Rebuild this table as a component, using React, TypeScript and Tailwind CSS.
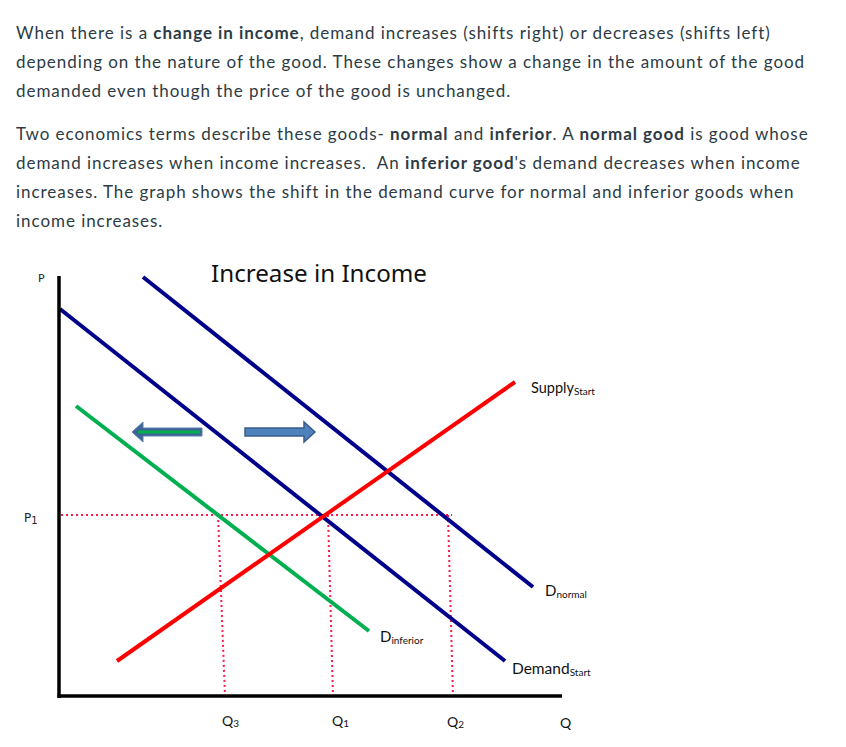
import React from "react";

// dotted guide lines share a style
const dotted = {
  stroke: "#ff1a4b",
  strokeWidth: 2,
  strokeDasharray: "2 3",
};

const labelFont = "Lato, 'Open Sans', sans-serif";

const IncomeChart: React.FC = () => {
  return (
    <svg
      width="846"
      height="497"
      viewBox="0 250 846 497"
      className="block"
      aria-label="Increase in Income graph"
    >
      {/* title */}
      <text
        x="211"
        y="283"
        fontFamily="'Noto Sans', 'DejaVu Sans', sans-serif"
        fontSize="24"
        textLength="216"
        lengthAdjust="spacingAndGlyphs"
        fill="#111"
      >
        Increase in Income
      </text>

      {/* axis labels */}
      <text x="38" y="283" fontFamily="'DejaVu Sans', sans-serif" fontSize="11" fill="#222">
        P
      </text>
      <text x="24" y="523" fontFamily="'DejaVu Sans', sans-serif" fontSize="12" fill="#222">
        P
        <tspan fontSize="10" dy="2">1</tspan>
      </text>

      {/* dotted guides */}
      <line x1="61" y1="516" x2="452" y2="516" {...dotted} />
      <line x1="218" y1="516" x2="225" y2="697" {...dotted} />
      <line x1="328" y1="516" x2="333" y2="697" {...dotted} />
      <line x1="448" y1="516" x2="453" y2="697" {...dotted} />

      {/* demand curves */}
      <line x1="143" y1="278" x2="533" y2="588" stroke="#00008b" strokeWidth="4" />
      <line x1="60" y1="310" x2="505" y2="662" stroke="#00008b" strokeWidth="4" />
      <line x1="76" y1="407" x2="369" y2="632" stroke="#00b050" strokeWidth="4" />

      {/* supply */}
      <line x1="117" y1="662" x2="515" y2="383" stroke="#ff0000" strokeWidth="4" />

      {/* axes */}
      <line x1="59" y1="277" x2="59" y2="699" stroke="#000" strokeWidth="3.5" />
      <line x1="57.5" y1="697" x2="562" y2="697" stroke="#000" strokeWidth="3.5" />

      {/* left shift arrow */}
      <polygon
        points="132,433 143,423 143,429 202,429 202,437 143,437 143,443"
        fill="#3e6593"
        stroke="#5b7fae"
        strokeWidth="1"
      />
      <line x1="138" y1="433" x2="200" y2="433" stroke="#00b050" strokeWidth="3" />

      {/* right shift arrow */}
      <polygon
        points="245,429 304,429 304,423 315,433 304,443 304,437 245,437"
        fill="#4f81bd"
        stroke="#385d8a"
        strokeWidth="1.5"
      />

      {/* curve labels */}
      <text x="531" y="394" fontFamily={labelFont} fontSize="14.5" fill="#111">
        Supply
        <tspan fontSize="10" dy="2">Start</tspan>
      </text>
      <text x="545" y="597" fontFamily={labelFont} fontSize="15" fill="#111">
        D
        <tspan fontSize="10" dy="2">normal</tspan>
      </text>
      <text x="380" y="643" fontFamily={labelFont} fontSize="15" fill="#111">
        D
        <tspan fontSize="10" dy="2">inferior</tspan>
      </text>
      <text x="512" y="675" fontFamily={labelFont} fontSize="15.5" fill="#111">
        Demand
        <tspan fontSize="10" dy="2">Start</tspan>
      </text>

      {/* quantity labels */}
      <text x="222" y="727" fontFamily={labelFont} fontSize="14" fill="#111">
        Q
        <tspan fontSize="10" dy="1">3</tspan>
      </text>
      <text x="332" y="727" fontFamily={labelFont} fontSize="14" fill="#111">
        Q
        <tspan fontSize="10" dy="1">1</tspan>
      </text>
      <text x="447" y="728" fontFamily={labelFont} fontSize="14" fill="#111">
        Q
        <tspan fontSize="10" dy="1">2</tspan>
      </text>
      <text x="560" y="729" fontFamily={labelFont} fontSize="14" fill="#111">
        Q
      </text>
    </svg>
  );
};

export default function App() {
  return (
    <div
      className="w-[846px] bg-white text-[#2d3b45]"
      style={{ fontFamily: "Lato, 'Open Sans', sans-serif" }}
    >
      <div className="px-4 pt-[18px] pr-[20px] text-[17px] leading-[29px] tracking-[0.95px]">
        <p>
          When there is a <strong className="font-bold">change in income</strong>, demand increases
          (shifts right) or decreases (shifts left) depending on the nature of the good. These
          changes show a change in the amount of the good demanded even though the price of the good
          is unchanged.
        </p>
        <p className="mt-[14px]">
          Two economics terms describe these goods- <strong className="font-bold">normal</strong>{" "}
          and <strong className="font-bold">inferior</strong>. A{" "}
          <strong className="font-bold">normal good</strong> is good whose demand increases when
          income increases.&nbsp; An <strong className="font-bold">inferior good</strong>'s demand
          decreases when income increases. The graph shows the shift in the demand curve for normal
          and inferior goods when income increases.
        </p>
      </div>
      <div className="mt-[14px]">
        <IncomeChart />
      </div>
    </div>
  );
}
